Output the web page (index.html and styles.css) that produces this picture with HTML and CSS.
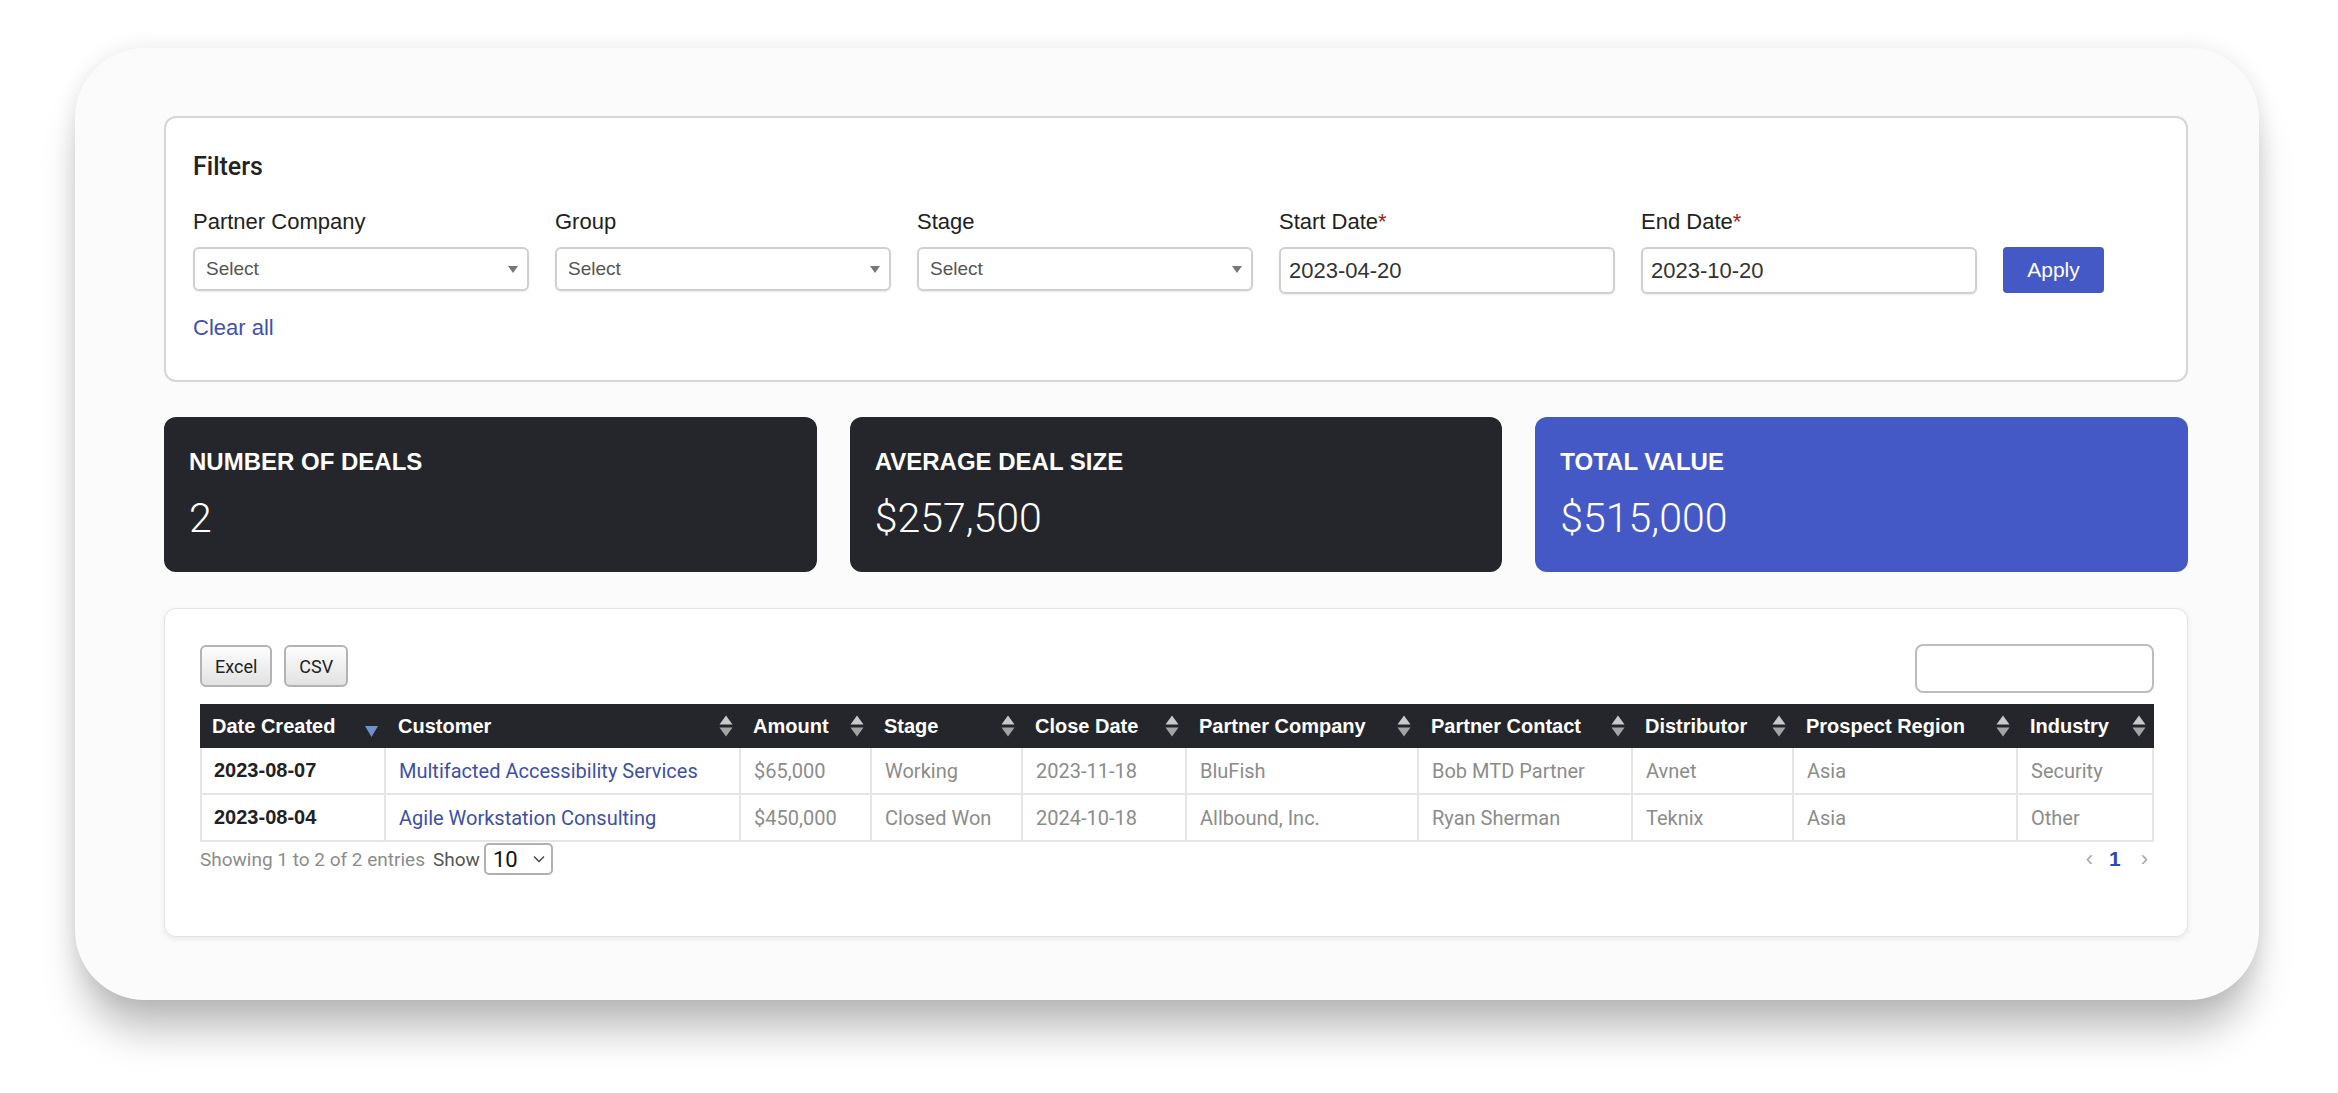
FILE: index.html
```html
<!DOCTYPE html>
<html lang="en">
<head>
<meta charset="utf-8">
<title>Deals Report</title>
<link rel="stylesheet" href="styles.css">
</head>
<body>
<svg class="defs" width="0" height="0" aria-hidden="true">
  <defs>
    <symbol id="sort" viewBox="0 0 14 22">
      <path d="M7 0.5 L13.5 9.5 H0.5 Z" fill="#c9c9c9"/>
      <path d="M7 21.5 L13.5 12.5 H0.5 Z" fill="#a3a3a3"/>
    </symbol>
  </defs>
</svg>
<div class="frame">
  <section class="filters">
    <h2 class="filters-title">Filters</h2>
    <div class="filter-row">
      <div class="field">
        <label class="field-label">Partner Company</label>
        <div class="select-box"><span>Select</span><span class="caret"></span></div>
      </div>
      <div class="field">
        <label class="field-label">Group</label>
        <div class="select-box"><span>Select</span><span class="caret"></span></div>
      </div>
      <div class="field">
        <label class="field-label">Stage</label>
        <div class="select-box"><span>Select</span><span class="caret"></span></div>
      </div>
      <div class="field">
        <label class="field-label">Start Date<span class="req">*</span></label>
        <div class="date-box">2023-04-20</div>
      </div>
      <div class="field">
        <label class="field-label">End Date<span class="req">*</span></label>
        <div class="date-box">2023-10-20</div>
      </div>
      <button class="apply">Apply</button>
    </div>
    <a class="clear-all">Clear all</a>
  </section>

  <section class="stats">
    <div class="stat dark">
      <div class="stat-title">NUMBER OF DEALS</div>
      <div class="stat-value">2</div>
    </div>
    <div class="stat dark">
      <div class="stat-title">AVERAGE DEAL SIZE</div>
      <div class="stat-value">$257,500</div>
    </div>
    <div class="stat blue">
      <div class="stat-title">TOTAL VALUE</div>
      <div class="stat-value">$515,000</div>
    </div>
  </section>

  <section class="table-card">
    <div class="toolbar">
      <div class="export">
        <button class="btn">Excel</button>
        <button class="btn">CSV</button>
      </div>
      <div class="search"></div>
    </div>
    <table class="grid">
      <colgroup>
        <col class="w-date"><col class="w-cust"><col class="w-amt"><col class="w-stage"><col class="w-close">
        <col class="w-pco"><col class="w-pct"><col class="w-dist"><col class="w-region"><col class="w-ind">
      </colgroup>
      <thead>
        <tr>
          <th><div class="th-inner"><span>Date Created</span><svg class="sorted" width="13" height="11" viewBox="0 0 13 11"><path d="M0 0 H13 L6.5 11 Z" fill="#6f91cc"/></svg></div></th>
          <th><div class="th-inner"><span>Customer</span><svg class="sort" width="14" height="22"><use href="#sort"/></svg></div></th>
          <th><div class="th-inner"><span>Amount</span><svg class="sort" width="14" height="22"><use href="#sort"/></svg></div></th>
          <th><div class="th-inner"><span>Stage</span><svg class="sort" width="14" height="22"><use href="#sort"/></svg></div></th>
          <th><div class="th-inner"><span>Close Date</span><svg class="sort" width="14" height="22"><use href="#sort"/></svg></div></th>
          <th><div class="th-inner"><span>Partner Company</span><svg class="sort" width="14" height="22"><use href="#sort"/></svg></div></th>
          <th><div class="th-inner"><span>Partner Contact</span><svg class="sort" width="14" height="22"><use href="#sort"/></svg></div></th>
          <th><div class="th-inner"><span>Distributor</span><svg class="sort" width="14" height="22"><use href="#sort"/></svg></div></th>
          <th><div class="th-inner"><span>Prospect Region</span><svg class="sort" width="14" height="22"><use href="#sort"/></svg></div></th>
          <th><div class="th-inner"><span>Industry</span><svg class="sort" width="14" height="22"><use href="#sort"/></svg></div></th>
        </tr>
      </thead>
      <tbody>
        <tr>
          <td>2023-08-07</td>
          <td><a class="link">Multifacted Accessibility Services</a></td>
          <td>$65,000</td>
          <td>Working</td>
          <td>2023-11-18</td>
          <td>BluFish</td>
          <td>Bob MTD Partner</td>
          <td>Avnet</td>
          <td>Asia</td>
          <td>Security</td>
        </tr>
        <tr>
          <td>2023-08-04</td>
          <td><a class="link">Agile Workstation Consulting</a></td>
          <td>$450,000</td>
          <td>Closed Won</td>
          <td>2024-10-18</td>
          <td>Allbound, Inc.</td>
          <td>Ryan Sherman</td>
          <td>Teknix</td>
          <td>Asia</td>
          <td>Other</td>
        </tr>
      </tbody>
    </table>
    <div class="table-footer">
      <div class="info">
        <span>Showing 1 to 2 of 2 entries</span>
        <span class="show">Show</span>
        <div class="length"><span>10</span><svg width="12" height="8" viewBox="0 0 12 8"><polyline points="1,1.5 6,6.5 11,1.5" fill="none" stroke="#444" stroke-width="1.4"/></svg></div>
      </div>
      <div class="pager">
        <span class="pg-arrow">&#8249;</span>
        <span class="pg-num">1</span>
        <span class="pg-arrow">&#8250;</span>
      </div>
    </div>
  </section>
</div>
</body>
</html>
```

FILE: styles.css
```css
* { box-sizing: border-box; }

html, body {
  margin: 0;
  padding: 0;
  background: #ffffff;
}

body {
  font-family: "Liberation Sans", Arial, sans-serif;
  color: #222;
  width: 2338px;
  height: 1093px;
  overflow: hidden;
  padding-top: 48px;
}

.defs {
  position: absolute;
  width: 0;
  height: 0;
}

.frame {
  margin-left: 75px;
  width: 2184px;
  height: 952px;
  border-radius: 70px;
  background: #fbfbfb;
  box-shadow: 0 38px 40px -8px rgba(0, 0, 0, 0.26), 0 0 22px rgba(0, 0, 0, 0.09);
  padding: 68px 71px 0 89px;
}

/* ---------- Filters ---------- */
.filters {
  background: #ffffff;
  border: 2px solid #d6d6d6;
  border-radius: 12px;
  height: 266px;
  padding: 34px 27px 0 27px;
}

.filters-title {
  margin: 0;
  font-family: Roboto, "Liberation Sans", sans-serif;
  font-weight: 500;
  font-size: 25px;
  line-height: 30px;
  color: #222;
}

.filter-row {
  display: flex;
  gap: 26px;
  margin-top: 27px;
  align-items: flex-start;
}

.field {
  width: 336px;
  display: flex;
  flex-direction: column;
}

.field-label {
  font-size: 22px;
  line-height: 26px;
  color: #222;
  margin-bottom: 12px;
}

.req { color: #9b2424; }

.select-box {
  height: 44px;
  border: 2px solid #d0d0d0;
  border-radius: 6px;
  background: #fff;
  display: flex;
  align-items: center;
  justify-content: space-between;
  padding: 0 9px 0 11px;
  font-size: 19px;
  color: #555;
  box-shadow: 0 1px 2px rgba(0, 0, 0, 0.08);
}

.caret {
  width: 0;
  height: 0;
  border-left: 5.5px solid transparent;
  border-right: 5.5px solid transparent;
  border-top: 7px solid #777;
}

.date-box {
  height: 47px;
  border: 2px solid #d0d0d0;
  border-radius: 6px;
  background: #fff;
  display: flex;
  align-items: center;
  padding: 0 8px;
  font-size: 22px;
  color: #333;
  box-shadow: 0 1px 2px rgba(0, 0, 0, 0.08);
}

.apply {
  margin-top: 38px;
  width: 101px;
  height: 46px;
  border: 0;
  border-radius: 4px;
  background: #4559c6;
  color: #fff;
  font-family: "Liberation Sans", Arial, sans-serif;
  font-size: 21px;
}

.clear-all {
  display: block;
  margin-top: 21px;
  font-size: 22px;
  line-height: 26px;
  color: #3f50b0;
}

/* ---------- Stats ---------- */
.stats {
  display: grid;
  grid-template-columns: repeat(3, 1fr);
  gap: 33px;
  margin-top: 35px;
}

.stat {
  height: 155px;
  border-radius: 12px;
  padding: 31px 25px;
  color: #fff;
}

.stat.dark { background: #25262b; }
.stat.blue { background: #4559c6; }

.stat-title {
  font-weight: bold;
  font-size: 24px;
  line-height: 28px;
}

.stat-value {
  font-family: Roboto, "Liberation Sans", sans-serif;
  font-weight: 300;
  font-size: 41px;
  line-height: 48px;
  margin-top: 18px;
}

/* ---------- Table card ---------- */
.table-card {
  margin-top: 36px;
  height: 329px;
  background: #fff;
  border: 1px solid #e3e3e3;
  border-radius: 12px;
  box-shadow: 0 2px 6px rgba(0, 0, 0, 0.08);
  padding: 35px 33px 0 35px;
}

.toolbar {
  display: flex;
  justify-content: space-between;
  align-items: flex-start;
  height: 49px;
  margin-bottom: 11px;
}

.export {
  display: flex;
  gap: 12px;
  padding-top: 1px;
}

.btn {
  height: 42px;
  padding: 0 13px;
  border: 2px solid #b3b3b3;
  border-radius: 6px;
  background: linear-gradient(#fdfdfd, #e2e2e2);
  font-family: Roboto, "Liberation Sans", sans-serif;
  font-size: 18px;
  color: #222;
}

.search {
  width: 239px;
  height: 49px;
  border: 2px solid #bdbdbd;
  border-radius: 8px;
  background: #fff;
}

.grid {
  width: 1954px;
  border-collapse: separate;
  border-spacing: 0;
  table-layout: fixed;
}

.w-date { width: 186px; }
.w-cust { width: 355px; }
.w-amt { width: 131px; }
.w-stage { width: 151px; }
.w-close { width: 164px; }
.w-pco { width: 232px; }
.w-pct { width: 214px; }
.w-dist { width: 161px; }
.w-region { width: 224px; }
.w-ind { width: 136px; }

.grid th {
  background: #25262b;
  color: #fff;
  height: 44px;
  padding: 0 8px 0 12px;
  font-family: "Liberation Sans", Arial, sans-serif;
  font-weight: bold;
  font-size: 20px;
  text-align: left;
  white-space: nowrap;
}

.th-inner {
  display: flex;
  justify-content: space-between;
  align-items: center;
}

.sorted { margin-top: 11px; }
.sort { display: block; }

.grid td {
  height: 47px;
  border-right: 2px solid #e5e5e5;
  border-bottom: 2px solid #e5e5e5;
  padding: 0 8px 0 13px;
  font-family: Roboto, "Liberation Sans", sans-serif;
  font-size: 20px;
  color: #8c8c8c;
  white-space: nowrap;
  overflow: hidden;
}

.grid td:first-child {
  border-left: 2px solid #e5e5e5;
  padding-left: 12px;
  font-family: "Liberation Sans", Arial, sans-serif;
  font-weight: bold;
  color: #222;
}

.link { color: #3e4fa8; }

.table-footer {
  display: flex;
  align-items: center;
  justify-content: space-between;
  margin-top: 1px;
  height: 32px;
}

.info {
  display: flex;
  align-items: center;
  font-family: Roboto, "Liberation Sans", sans-serif;
  font-size: 19px;
  color: #8c8c8c;
}

.show {
  margin-left: 8px;
  color: #555;
}

.length {
  margin-left: 4px;
  width: 69px;
  height: 32px;
  border: 2px solid #b0b0b0;
  border-radius: 5px;
  display: flex;
  align-items: center;
  justify-content: space-between;
  padding: 0 6px 0 7px;
  font-size: 22px;
  color: #111;
}

.pager {
  display: flex;
  align-items: center;
  margin-right: 6px;
  font-family: "Liberation Sans", Arial, sans-serif;
}

.pg-arrow {
  font-size: 22px;
  color: #aaa;
}

.pg-num {
  margin: 0 20px 0 16px;
  font-size: 21px;
  font-weight: bold;
  color: #2e47b6;
}
```
